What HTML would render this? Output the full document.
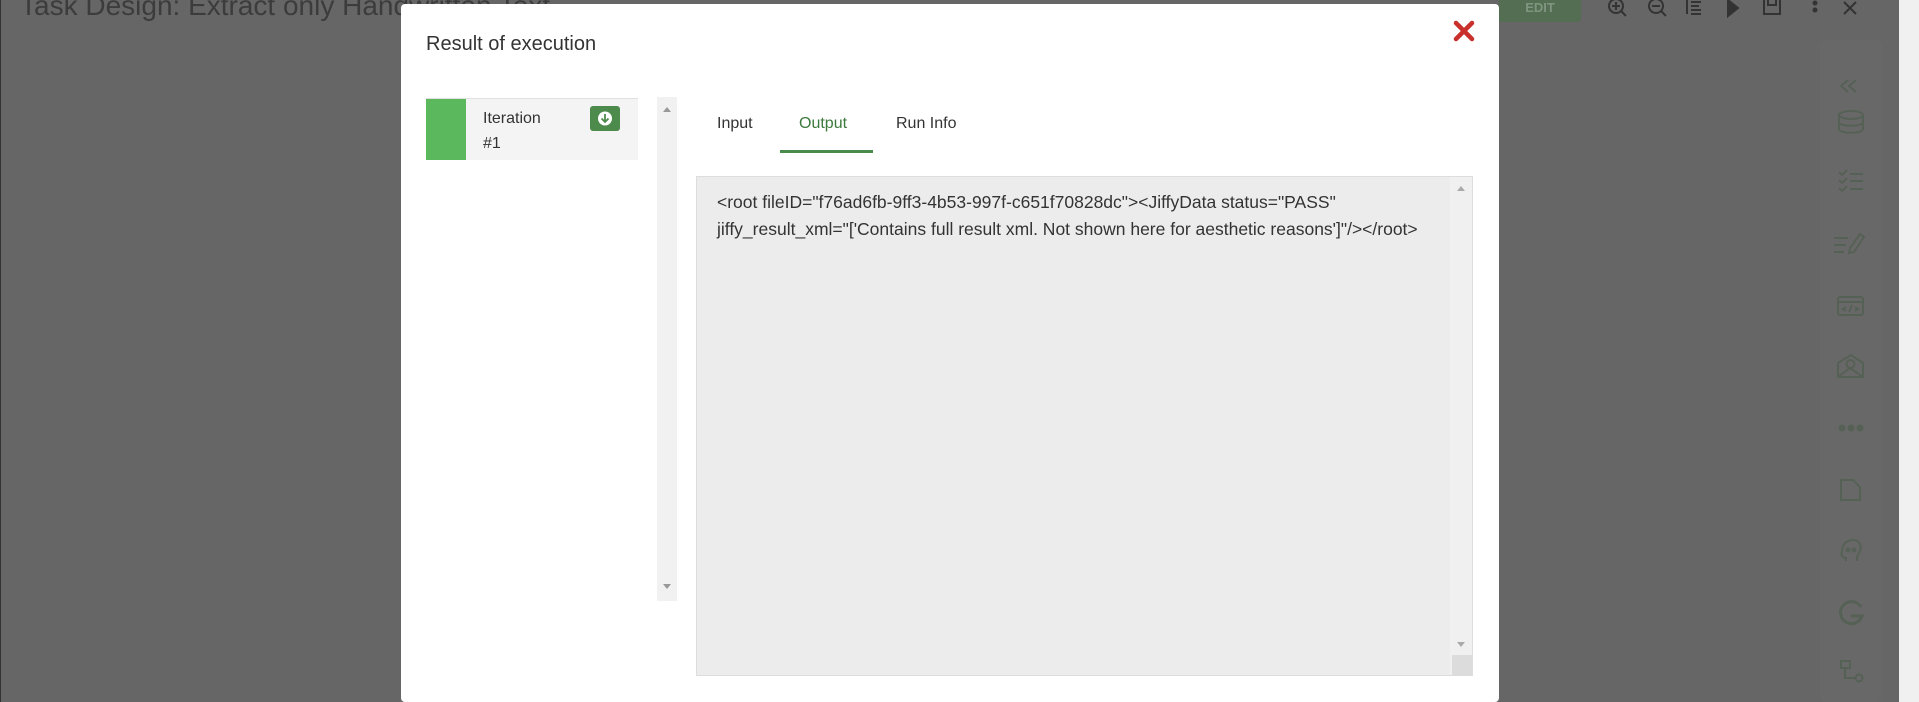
<!DOCTYPE html>
<html><head><meta charset="utf-8"><style>
*{box-sizing:border-box;margin:0;padding:0}
body{width:1919px;height:702px;overflow:hidden;background:#666;font-family:"Liberation Sans",sans-serif;position:relative}
.abs{position:absolute}
</style></head><body>
<div class="abs" style="left:0;top:0;width:1px;height:702px;background:#333"></div>
<div class="abs" style="left:20px;top:-10px;font-size:28px;color:#3c3c3c;white-space:nowrap">Task Design: Extract only Handwritten Text</div>
<div class="abs" style="left:1499px;top:0;width:82px;height:22px;background:#536e53;border-radius:0 0 4px 0;color:#7f957f;font-weight:bold;font-size:13px;text-align:center;line-height:16px">EDIT</div>
<svg class="abs" style="left:1600px;top:0" width="280" height="22" fill="none" stroke="#333" stroke-width="2">
<circle cx="16" cy="6" r="7"/><path d="M21 11l5 5M12 6h8M16 2v8"/>
<circle cx="56" cy="6" r="7"/><path d="M61 11l5 5M52 6h8"/>
<path d="M87 0v14M91 2h10M91 6h8M91 10h10M91 14h10"/>
<path d="M128 0l10 8-10 8z" fill="#333"/>
<path d="M164 0v14h16v-14M168 0v5h8v-5" />
<circle cx="215" cy="3" r="1.5" fill="#333"/><circle cx="215" cy="10" r="1.5" fill="#333"/>
<path d="M244 2l12 12M256 2l-12 12"/>
</svg>
<div class="abs" style="left:1899px;top:0;width:20px;height:702px;background:#f0f0f0"></div>
<div class="abs" style="left:1820px;top:40px;width:62px;height:662px;background:#686868;border-radius:6px"></div>
<svg class="abs" style="left:1820px;top:0" width="62" height="702" fill="none" stroke="#566156" stroke-width="2">
<g transform="translate(0,86)"><path d="M28 -6l-7 6 7 6M36 -6l-7 6 7 6"/></g>
<g transform="translate(0,122)"><ellipse cx="31" cy="-7" rx="12" ry="4"/><path d="M19 -7v14c0 5 24 5 24 0V-7M19 0c0 5 24 5 24 0"/></g>
<g transform="translate(0,181)"><path d="M19 -9l3 3 5-5M19 -1l3 3 5-5M19 7l3 3 5-5M30 -7h13M30 0h13M30 8h13"/></g>
<g transform="translate(0,245)"><path d="M14 -7h14M14 0h12M14 7h10M40 -11l4 3-10 15-5 1 1-5z"/></g>
<g transform="translate(0,306)"><rect x="18" y="-9" width="25" height="18" rx="2"/><path d="M18 -4h25M26 1l-3 2 3 2M35 1l3 2-3 2M32 -1l-3 7"/></g>
<g transform="translate(0,367)"><path d="M18 -4v14h25v-14l-12-8zM18 10l12-9 13 9"/><circle cx="30.5" cy="-3" r="4"/></g>
<g transform="translate(0,428)"><circle cx="22" cy="0" r="2.5" fill="#566156"/><circle cx="31" cy="0" r="2.5" fill="#566156"/><circle cx="40" cy="0" r="2.5" fill="#566156"/></g>
<g transform="translate(0,490)"><path d="M21 -10h12l7 7v13H21z"/></g>
<g transform="translate(0,551)"><path d="M26 10v-3c-5 0-5-5-4-7 0-7 5-11 11-11s9 5 7 11c-1 3-3 4-3 7v3"/><circle cx="28" cy="-1" r="1.5"/><circle cx="34" cy="-1" r="1.5"/></g>
<g transform="translate(0,612)"><path d="M41 -5a11 11 0 1 0 1 9h-11" stroke-width="3"/></g>
<g transform="translate(0,671)"><rect x="21" y="-10" width="9" height="7"/><path d="M25 -3v10h10"/><circle cx="39" cy="7" r="3.5"/></g>
</svg>

<div class="abs" style="left:401px;top:4px;width:1098px;height:698px;background:#fff;border-radius:4px">
<div class="abs" style="left:25px;top:29px;font-size:20px;color:#333">Result of execution</div>
<svg class="abs" style="left:1052px;top:16px" width="22" height="22"><path d="M3 3l16 16M19 3L3 19" stroke="#c9302c" stroke-width="4.5" stroke-linecap="round"/></svg>
<div class="abs" style="left:25px;top:94px;width:212px;height:62px;background:#f4f4f4;border-top:1px solid #e0e0e0">
<div class="abs" style="left:0;top:0;width:40px;height:61px;background:#5cb85c"></div>
<div class="abs" style="left:57px;top:7px;font-size:16px;color:#333;line-height:25px">Iteration<br>#1</div>
<div class="abs" style="left:164px;top:7px;width:30px;height:25px;background:#4d8b4d;border-radius:3px"><svg width="30" height="25"><circle cx="15" cy="12.5" r="7" fill="#fff"/><path d="M15 8v8M11.5 12.5l3.5 3.5 3.5-3.5" stroke="#4d8b4d" stroke-width="1.8" fill="none"/></svg></div>
</div>
<div class="abs" style="left:256px;top:93px;width:20px;height:504px;background:#f1f1f1"><div style="position:absolute;left:6px;top:10px;border:4px solid transparent;border-bottom:5px solid #999;border-top:0"></div><div style="position:absolute;left:6px;bottom:12px;border:4px solid transparent;border-top:5px solid #999;border-bottom:0"></div></div>
<div class="abs" style="left:316px;top:111px;font-size:16px;color:#333">Input</div>
<div class="abs" style="left:398px;top:111px;font-size:16px;color:#3d7a3d">Output</div>
<div class="abs" style="left:495px;top:111px;font-size:16px;color:#333">Run Info</div>
<div class="abs" style="left:379px;top:146px;width:93px;height:3px;background:#4a8a4a"></div>
<div class="abs" style="left:295px;top:172px;width:777px;height:500px;background:#ececec;border:1px solid #ddd">
<div class="abs" style="left:20px;top:12px;font-size:17.5px;color:#333;line-height:27px;white-space:nowrap">&lt;root fileID="f76ad6fb-9ff3-4b53-997f-c651f70828dc"&gt;&lt;JiffyData status="PASS"<br>jiffy_result_xml="['Contains full result xml. Not shown here for aesthetic reasons']"/&gt;&lt;/root&gt;</div>
<div class="abs" style="right:0;top:0;width:22px;height:498px;background:#f0f0f0"><div style="position:absolute;left:7px;top:9px;border:4px solid transparent;border-bottom:5px solid #aaa;border-top:0"></div><div style="position:absolute;left:7px;bottom:28px;border:4px solid transparent;border-top:5px solid #aaa;border-bottom:0"></div><div style="position:absolute;left:2px;bottom:0;width:20px;height:20px;background:#dcdcdc"></div></div>
</div>
</div>
</body></html>
